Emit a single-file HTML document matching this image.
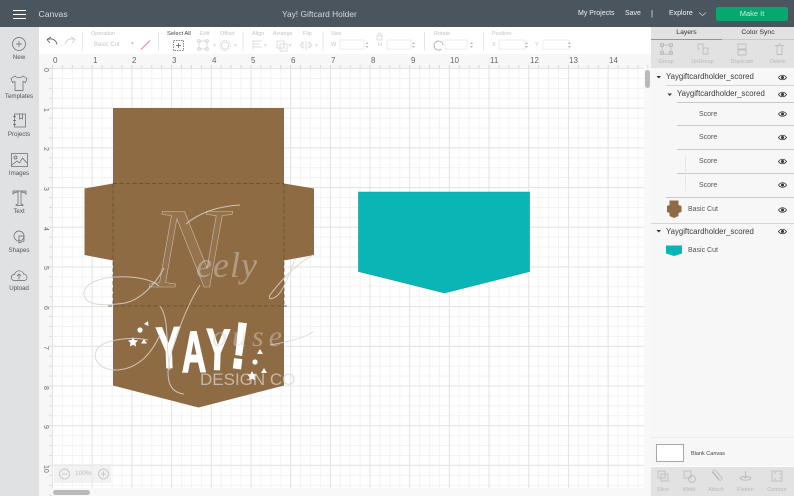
<!DOCTYPE html>
<html><head><meta charset="utf-8"><style>
html,body{margin:0;padding:0;background:#fff}
#p{position:relative;width:794px;height:496px;overflow:hidden;font-family:"Liberation Sans",sans-serif;color:#444;background:#fff;filter:blur(.3px)}
#p div,#p span{position:absolute;white-space:nowrap}
.t{line-height:1}
.c{transform:translateX(-50%)}
.lb{font-size:6.200px;color:#555;transform:translateX(-50%)}
.g{font-size:5.500px;color:#c4c4c4}
.a{font-size:5.500px;color:#b9b9b9;transform:translateX(-50%)}
.r{font-size:8px;color:#666;top:57px}
.v{font-size:7px;color:#666;left:42px;transform:rotate(90deg);transform-origin:left top;margin-left:7px}
.l{height:1px;background:#c8c8c8;right:0}
.n{font-size:7.800px;color:#3c3c3c}
.s{font-size:7px;color:#555}
svg{position:absolute;overflow:visible}
</style></head><body><div id="p">

<!-- canvas grid -->
<div style="left:51.700px;top:67.600px;width:600px;height:430px;background-image:linear-gradient(to right,#e4e4e4 1px,transparent 1px),linear-gradient(to bottom,#e4e4e4 1px,transparent 1px),linear-gradient(to right,#f3f3f3 1px,transparent 1px),linear-gradient(to bottom,#f3f3f3 1px,transparent 1px);background-size:39.700px 39.700px,39.700px 39.700px,9.925px 9.925px,9.925px 9.925px"></div>

<!-- shapes -->
<svg width="794" height="496" style="left:0;top:0">
<polygon points="113,108 284,108 284,183.500 314,188.500 314,255 284,260.500 284,385.500 198.500,407.500 113,385.500 113,260.500 84.500,255 84.500,188.500 113,183.500" fill="#8f6b43"/>
<g fill="none" stroke="#5f4a32" stroke-width=".7" stroke-dasharray="4 2.500">
<path d="M113 183.500H284M113 183.500V306M284 183.500V306M108 306H287"/>
</g>
<polygon points="358.500,192 529.500,192 529.500,271.500 444.500,293 358.500,271.500" fill="#0ab5b5" stroke="#149a9a" stroke-width=".6"/>
<g fill="#fff" font-family="Liberation Sans" font-weight="700" font-size="58" stroke="#fff" stroke-width="1.600">
<text transform="translate(157,368) rotate(-2) scale(.64,1)">Y</text>
<text transform="translate(182,372) rotate(-1) scale(.58,1)">A</text>
<text transform="translate(205,369) rotate(2) scale(.62,1)">Y</text>
<text transform="translate(229,367) rotate(7) scale(.85,1.120)">!</text>
</g>
<g fill="#fff">
<circle cx="140" cy="330" r="2.600"/><circle cx="255" cy="362" r="2.600"/>
<polygon points="148,321 148.500,326 144,324"/><polygon points="144,339 147,343.500 141,343.500"/><polygon points="260,349 263,354 257,354"/><polygon points="264,368 267,373 261,373"/>
<polygon points="133,337 134.500,340 138,340.500 135.500,343 136,346.500 133,344.800 130,346.500 130.500,343 128,340.500 131.500,340"/>
<polygon points="252,371 253.500,374 257,374.500 254.500,377 255,380.500 252,378.800 249,380.500 249.500,377 247,374.500 250.500,374"/>
</g>
<!-- watermark -->
<g fill="none" stroke="#d9d5d0" stroke-width="1" opacity=".85">
<path d="M159 286C150 278 130 276 115 277C98 278 83 284 84 295C86 306 105 306 125 303C140 300 155 285 164 268"/>
<path d="M186 224C200 212 220 206 240 205"/>
<path d="M148 340C130 336 105 340 98 348C90 358 100 371 118 370C140 368 152 352 160 335"/>
<path d="M200 285C190 300 170 345 168 372C168 388 175 393 184 394"/>
<path d="M160 306C170 320 165 345 170 370"/>
<path d="M270 345C285 342 300 340 313 332"/>
<path d="M313 255C300 262 285 275 270 295C268 300 272 300 278 295C285 288 290 270 296 258"/>
</g>
<text x="150" y="287" font-size="116" font-family="Liberation Serif" font-style="italic" fill="#d9d5d0" fill-opacity=".08" stroke="#d9d5d0" stroke-width=".6" stroke-opacity=".75">N</text>
<g fill="#d9d5d0" opacity=".45" font-family="Liberation Serif" font-style="italic">
<text x="196" y="277" font-size="36" letter-spacing="1">eely</text>
<text x="212" y="346" font-size="30" letter-spacing="5">ouse</text>
</g>
<text x="200" y="385" font-family="Liberation Sans" font-size="17" fill="#dcd8d2" opacity=".7">DESIGN CO</text>
</svg>

<!-- rulers -->
<div style="left:39px;top:54px;width:612px;height:14px;background:#f7f7f8"></div>
<div style="left:51.700px;top:64.500px;width:600px;height:3.500px;background-image:linear-gradient(to right,#d6d6d6 1px,transparent 1px);background-size:9.925px 4px"></div>
<div style="left:39px;top:68px;width:12.500px;height:428px;background:#f7f7f8"></div>
<div style="left:48.500px;top:67.600px;width:3px;height:430px;background-image:linear-gradient(to bottom,#dadada 1px,transparent 1px);background-size:4px 9.925px"></div>
<span class="t r" style="left:53px">0</span><span class="t r" style="left:93px">1</span><span class="t r" style="left:132px">2</span><span class="t r" style="left:172px">3</span><span class="t r" style="left:212px">4</span><span class="t r" style="left:251px">5</span><span class="t r" style="left:291px">6</span><span class="t r" style="left:331px">7</span><span class="t r" style="left:371px">8</span><span class="t r" style="left:411px">9</span><span class="t r" style="left:450px">10</span><span class="t r" style="left:490px">11</span><span class="t r" style="left:530px">12</span><span class="t r" style="left:569px">13</span><span class="t r" style="left:609px">14</span>
<span class="t v" style="top:68px">0</span><span class="t v" style="top:108px">1</span><span class="t v" style="top:147px">2</span><span class="t v" style="top:187px">3</span><span class="t v" style="top:227px">4</span><span class="t v" style="top:266px">5</span><span class="t v" style="top:306px">6</span><span class="t v" style="top:346px">7</span><span class="t v" style="top:386px">8</span><span class="t v" style="top:425px">9</span><span class="t v" style="top:465px">10</span>

<!-- zoom + scrollbars -->
<div style="left:54px;top:464px;width:57px;height:19px;background:rgba(235,235,235,.65)"></div>
<svg width="794" height="496" style="left:0;top:0"><g fill="none" stroke="#c9c9c9"><circle cx="64.500" cy="474" r="5"/><circle cx="103.500" cy="474" r="5"/><path d="M62 474h5M101 474h5M103.500 471.500v5"/></g></svg>
<span class="t" style="left:75px;top:471px;font-size:6.500px;color:#bdbdbd">100%</span>
<div style="left:52px;top:488px;width:600px;height:8px;background:#f8f8f8"></div>
<div style="left:53px;top:490px;width:37px;height:5px;background:#b9b9b9;border-radius:3px"></div>
<div style="left:644px;top:68px;width:7px;height:428px;background:#f8f8f8"></div>
<div style="left:644.500px;top:70px;width:5px;height:18px;background:#b9b9b9;border-radius:3px"></div>

<!-- header -->
<div style="left:0;top:0;width:794px;height:27px;background:#4a555d"></div>
<div style="left:13px;top:9.500px;width:13px;height:1.300px;background:#fff"></div><div style="left:13px;top:13.500px;width:13px;height:1.300px;background:#fff"></div><div style="left:13px;top:17.500px;width:13px;height:1.300px;background:#fff"></div>
<span class="t" style="left:38.500px;top:9.500px;font-size:8.600px;color:#d6dadc">Canvas</span>
<span class="t" style="left:282px;top:9.500px;font-size:8.400px;color:#d6dadc">Yay! Giftcard Holder</span>
<span class="t" style="left:578px;top:10px;font-size:7px;color:#f0f2f3">My Projects</span>
<span class="t" style="left:625px;top:10px;font-size:7px;color:#f0f2f3">Save</span>
<span class="t" style="left:651px;top:9.500px;font-size:8px;color:#f0f2f3">|</span>
<span class="t" style="left:669px;top:10px;font-size:7px;color:#f0f2f3">Explore</span>
<svg width="794" height="30" style="left:0;top:0"><path d="M699 12.500l3.500 3 3.500-3" fill="none" stroke="#c9ced1" stroke-width=".8"/></svg>
<div style="left:716px;top:7px;width:72px;height:14px;background:#07a86f;border-radius:2px"></div>
<span class="t c" style="left:752px;top:10px;font-size:7.500px;color:#c8eede">Make It</span>

<!-- toolbar -->
<div style="left:39px;top:27px;width:612px;height:27px;background:#fff"></div>
<div style="left:0;top:27px;width:39px;height:469px;background:#e0e1e3"></div>
<span class="t g" style="left:91px;top:32px">Operation</span>
<span class="t g" style="left:94px;top:42px;font-size:6px">Basic Cut</span>
<span class="t g" style="left:131px;top:42px">▾</span>
<span class="t" style="left:167px;top:32px;font-size:5.800px;color:#444">Select All</span>
<span class="t g" style="left:200px;top:32px">Edit</span><span class="t g" style="left:220px;top:32px">Offset</span>
<span class="t g" style="left:252px;top:32px">Align</span><span class="t g" style="left:273px;top:32px">Arrange</span><span class="t g" style="left:303px;top:32px">Flip</span>
<span class="t g" style="left:331px;top:32px">Size</span>
<span class="t g" style="left:331px;top:43px">W</span><span class="t g" style="left:378px;top:43px">H</span>
<span class="t g" style="left:434px;top:32px">Rotate</span><span class="t g" style="left:492px;top:32px">Position</span>
<span class="t g" style="left:492px;top:43px">X</span><span class="t g" style="left:535px;top:43px">Y</span>
<svg width="794" height="60" style="left:0;top:0">
<g stroke="#e6e6e6"><path d="M82.500 32v19M158.500 32v19M243 32v19M323 32v19M424.500 32v19M483.500 32v19"/></g>
<g fill="none" stroke="#ececec"><rect x="340" y="40" width="24" height="9"/><rect x="387" y="40" width="24" height="9"/><rect x="445" y="40" width="22" height="9"/><rect x="499" y="40" width="26" height="9"/><rect x="543" y="40" width="26" height="9"/></g>
<path d="M141 49.500l9-9" stroke="#ef7b8c" stroke-width="1"/>
<g fill="none" stroke="#5f6468" stroke-width=".9"><path d="M47 39.500l4-2.500M47 39.500l3 3.500M47 39.500c5-1.500 9 0 10 5"/></g>
<g fill="none" stroke="#cfcfcf" stroke-width=".9"><path d="M75 39.500l-4-2.500M75 39.500l-3 3.500M75 39.500c-5-1.500-9 0-10 5"/></g>
<rect x="173.500" y="40.500" width="10" height="10" fill="none" stroke="#555" stroke-width=".7" stroke-dasharray="1.500 1"/><path d="M178.500 43v5M176 45.500h5" stroke="#555" stroke-width=".7"/>
<g fill="none" stroke="#d4d4d4" stroke-width=".8">
<rect x="199" y="41" width="8" height="8"/><circle cx="199" cy="41" r="1.500"/><circle cx="207" cy="41" r="1.500"/><circle cx="199" cy="49" r="1.500"/><circle cx="207" cy="49" r="1.500"/>
<circle cx="225" cy="45.500" r="3.500"/><circle cx="225" cy="45.500" r="5.200" stroke-dasharray="1.500 1"/>
<path d="M253 41h9M253 44h7M253 47h9M253 40v9"/>
<rect x="277" y="41" width="7" height="7"/><rect x="280" y="44" width="7" height="7"/>
<path d="M306 41v9M303 42l-3 3 3 3zM309 42l3 3-3 3z"/>
<rect x="377" y="36" width="5" height="4"/><path d="M378 36v-1.500a1.500 1.500 0 0 1 3 0v1.500"/>
<path d="M443 45.500a4.500 4.500 0 1 0-1.500 3.400" stroke="#aaa"/>
</g>
<g fill="#cfcfcf"><path d="M213 44.500h3l-1.500 2zM234 44.500h3l-1.500 2zM264 44.500h3l-1.500 2zM288.500 44.500h3l-1.500 2zM315 44.500h3l-1.500 2z"/></g>
<g fill="#bbb"><path d="M365.500 44l1.500-2 1.500 2zM365.500 46l1.500 2 1.500-2zM412 44l1.500-2 1.500 2zM412 46l1.500 2 1.500-2zM470 44l1.500-2 1.500 2zM470 46l1.500 2 1.500-2zM525 44l1.500-2 1.500 2zM525 46l1.500 2 1.500-2zM568 44l1.500-2 1.500 2zM568 46l1.500 2 1.500-2z"/></g>
</svg>

<!-- sidebar -->
<svg width="40" height="300" style="left:0;top:0">
<g fill="none" stroke="#62676b" stroke-width=".7">
<circle cx="19" cy="44" r="6.500"/><path d="M19 41v6M16 44h6"/>
<path d="M15 76l-4 2.500 1.500 4 2.500-1v9h8v-9l2.500 1 1.500-4-4-2.500c-1 2-7 2-8 0z"/>
<rect x="14.500" y="114" width="11" height="13"/><path d="M13 116.500h3M13 120.500h3M13 124.500h3M19.500 114v5l1.500-1 1.500 1v-5"/>
<rect x="11.500" y="153.500" width="16" height="13"/><circle cx="15.500" cy="157.500" r="1.500"/><path d="M12 165l5-4 2.500 2 3-5 4.500 5"/>
<path d="M13 194v-3h13v3c-1-1.500-3-2-5-2v12l2 .8v.7h-7v-.7l2-.8v-12c-2 0-4 .5-5 2z"/>
<circle cx="19" cy="236" r="5"/><path d="M19 236l5 0 0 5-5 2z"/>
<path d="M14 280.500a3 3 0 0 1 .5-6 4.800 4.800 0 0 1 9.200-.5 3.300 3.300 0 0 1 .800 6.500zM19 279.500v-5M17 276l2-2 2 2"/>
</g></svg>
<span class="t lb" style="left:19px;top:55px">New</span>
<span class="t lb" style="left:19px;top:93.500px">Templates</span>
<span class="t lb" style="left:19px;top:132px">Projects</span>
<span class="t lb" style="left:19px;top:170.500px">Images</span>
<span class="t lb" style="left:19px;top:209px">Text</span>
<span class="t lb" style="left:19px;top:247.500px">Shapes</span>
<span class="t lb" style="left:19px;top:286px">Upload</span>

<!-- right panel -->
<div style="left:651px;top:27px;width:143px;height:13px;background:#e2e2e3"></div>
<div style="left:651px;top:39px;width:71px;height:1px;background:#8f9498"></div>
<div style="left:722px;top:39px;width:72px;height:1px;background:#c9c9c9"></div>
<span class="t c" style="left:686.500px;top:29.500px;font-size:6.800px;color:#333">Layers</span>
<span class="t c" style="left:758px;top:29.500px;font-size:6.800px;color:#333">Color Sync</span>
<div style="left:651px;top:40px;width:143px;height:28px;background:#e2e2e3"></div>
<svg width="794" height="70" style="left:0;top:0"><g fill="none" stroke="#bdbdbd" stroke-width=".9">
<rect x="662" y="45" width="9" height="9"/><rect x="660.500" y="43.500" width="3" height="3"/><rect x="669.500" y="43.500" width="3" height="3"/><rect x="660.500" y="51.500" width="3" height="3"/><rect x="669.500" y="51.500" width="3" height="3"/>
<path d="M698 44h5v4h5v6h-5v-6M698 44v5h2"/>
<rect x="738" y="44" width="8" height="6"/><rect x="738" y="49" width="8" height="6"/>
<path d="M775 45.500h9M777 45.500v9h5v-9M778 44h3"/>
</g></svg>
<span class="t a" style="left:666px;top:59.500px">Group</span><span class="t a" style="left:702.500px;top:59.500px">UnGroup</span><span class="t a" style="left:742px;top:59.500px">Duplicate</span><span class="t a" style="left:778px;top:59.500px">Delete</span>
<div style="left:651px;top:68px;width:143px;height:369px;background:#f7f7f7"></div>

<svg width="794" height="496" style="left:0;top:0">
<g fill="#333"><path d="M656.500 76h4.500l-2.250 2.500zM667.500 93.500h4.500l-2.250 2.500zM656.500 230h4.500l-2.250 2.500z"/></g>
<g fill="none" stroke="#333" stroke-width=".8">
<path d="M778.500 77.500c2-3 6-3 8 0-2 3-6 3-8 0z"/>
<path d="M778.500 94.500c2-3 6-3 8 0-2 3-6 3-8 0z"/>
<path d="M778.500 114c2-3 6-3 8 0-2 3-6 3-8 0z"/>
<path d="M778.500 137.500c2-3 6-3 8 0-2 3-6 3-8 0z"/>
<path d="M778.500 161.500c2-3 6-3 8 0-2 3-6 3-8 0z"/>
<path d="M778.500 185c2-3 6-3 8 0-2 3-6 3-8 0z"/>
<path d="M778.500 210c2-3 6-3 8 0-2 3-6 3-8 0z"/>
<path d="M778.500 231.500c2-3 6-3 8 0-2 3-6 3-8 0z"/>
</g>
<g fill="#333"><circle cx="782.500" cy="77.500" r="1.500"/><circle cx="782.500" cy="94.500" r="1.500"/><circle cx="782.500" cy="114" r="1.500"/><circle cx="782.500" cy="137.500" r="1.500"/><circle cx="782.500" cy="161.500" r="1.500"/><circle cx="782.500" cy="185" r="1.500"/><circle cx="782.500" cy="210" r="1.500"/><circle cx="782.500" cy="231.500" r="1.500"/></g>
<polygon points="669.500,200.500 678.500,200.500 678.500,205 681.500,206 681.500,212 678.500,213 678.500,216 674,218 669.500,216 669.500,213 667,212 667,206 669.500,205" fill="#8f6b43"/>
<polygon points="666,245.500 682,245.500 682,253.500 674,256 666,253.500" fill="#0ab5b5"/>
</svg>
<span class="t n" style="left:666px;top:73px">Yaygiftcardholder_scored</span>
<span class="t n" style="left:677px;top:90px">Yaygiftcardholder_scored</span>
<span class="t s" style="left:699px;top:110.500px">Score</span>
<span class="t s" style="left:699px;top:134px">Score</span>
<span class="t s" style="left:699px;top:157.500px">Score</span>
<span class="t s" style="left:699px;top:181.500px">Score</span>
<span class="t s" style="left:688px;top:205.500px">Basic Cut</span>
<span class="t n" style="left:666px;top:227.500px">Yaygiftcardholder_scored</span>
<span class="t s" style="left:688px;top:247px">Basic Cut</span>
<div class="l" style="left:666px;top:85px;background:#d5d5d5"></div>
<div class="l" style="left:677px;top:102px"></div>
<div class="l" style="left:677px;top:125px"></div>
<div class="l" style="left:677px;top:149px"></div>
<div class="l" style="left:677px;top:173px"></div>
<div class="l" style="left:666px;top:197px"></div>
<div class="l" style="left:651px;top:222.500px;background:#d5d5d5"></div>
<div style="left:685px;top:155px;width:1px;height:36px;background:#e8e8e8"></div>

<div style="left:651px;top:437px;width:143px;height:28px;background:#f7f7f7;border-top:1px solid #ececec"></div>
<div style="left:656px;top:444px;width:28px;height:18px;background:#fff;border:1px solid #a8a8a8;box-sizing:border-box"></div>
<span class="t" style="left:691px;top:452px;font-size:5.500px;color:#444">Blank Canvas</span>
<div style="left:651px;top:467px;width:143px;height:29px;background:#e2e2e3"></div>
<svg width="794" height="496" style="left:0;top:0"><g fill="none" stroke="#bdbdbd" stroke-width=".9">
<rect x="658" y="471" width="7" height="7"/><rect x="661" y="474" width="7" height="7"/>
<rect x="684" y="471" width="7" height="7"/><circle cx="692" cy="479" r="3.500"/>
<path d="M712 472l7 8a2 2 0 0 0 3-2l-7-8a1.500 1.500 0 0 0-2 2l6 7"/>
<path d="M740 478c2-2 9-2 11 0-2 3-9 3-11 0zM745.500 471v7M743 476l2.500 2 2.500-2"/>
<rect x="772" y="471" width="10" height="10"/><path d="M774 473h2M780 473v2M774 479h2M780 479v-2"/>
</g></svg>
<span class="t a" style="left:663px;top:488px">Slice</span><span class="t a" style="left:689px;top:488px">Weld</span><span class="t a" style="left:716px;top:488px">Attach</span><span class="t a" style="left:745.500px;top:488px">Flatten</span><span class="t a" style="left:777px;top:488px">Contour</span>
</div></body></html>
